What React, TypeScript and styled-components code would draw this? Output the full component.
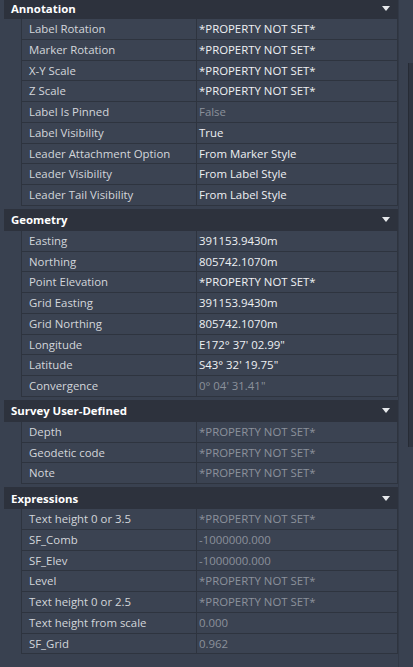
import React from "react";
import styled, { createGlobalStyle } from "styled-components";

const Global = createGlobalStyle`
  html, body { margin: 0; padding: 0; background: #394150; overflow: hidden; }
  body { font-family: "Open Sans", "Noto Sans", sans-serif; }
`;

const Page = styled.div`
  display: flex;
  width: 413px;
  height: 667px;
  background: #394150;
  overflow: hidden;
`;

const Panel = styled.div`
  width: 394px;
  margin-left: 4px;
  margin-top: -3px;
  display: flex;
  flex-direction: column;
  gap: 3px;
`;

const Gutter = styled.div`
  flex: 1;
  border-left: 1px solid #323946;
  display: flex;
  justify-content: flex-end;
`;

const Thumb = styled.div`
  width: 4px;
  height: 384px;
  margin-top: 63px;
  background: #2f3541;
  border-left: 1px solid #262b35;
`;

const Section = styled.div`
  display: flex;
  flex-direction: column;
`;

const Header = styled.div`
  height: 22px;
  background: #2d323d;
  display: flex;
  align-items: center;
  justify-content: space-between;
  padding: 0 8px 0 7px;
  color: #ffffff;
  font-weight: 700;
  font-size: 11.4px;
`;

const Caret = styled.svg`
  width: 8px;
  height: 5px;
  display: block;
`;

const Rows = styled.div`
  margin-left: 17px;
  border-left: 1px solid #2e343f;
  border-right: 1px solid #2e343f;
  display: flex;
  flex-direction: column;
`;

const Row = styled.div`
  height: 19.75px;
  border-bottom: 1px solid #2e343f;
  background: #3b4352;
  display: grid;
  grid-template-columns: 175px 1fr;
  font-size: 11.4px;
  line-height: 19.75px;
`;

const Label = styled.div`
  padding-left: 7px;
  color: #d3d6db;
  border-right: 1px solid #2e343f;
  white-space: nowrap;
  overflow: hidden;
`;

const Value = styled.div<{ $dim?: boolean }>`
  padding-left: 2px;
  color: ${(p) => (p.$dim ? "#8b919b" : "#eef0f2")};
  white-space: nowrap;
  overflow: hidden;
`;

type Item = [string, string, boolean?];

const NS = "*PROPERTY NOT SET*";

const sections: { title: string; items: Item[] }[] = [
  {
    title: "Annotation",
    items: [
      ["Label Rotation", NS],
      ["Marker Rotation", NS],
      ["X-Y Scale", NS],
      ["Z Scale", NS],
      ["Label Is Pinned", "False", true],
      ["Label Visibility", "True"],
      ["Leader Attachment Option", "From Marker Style"],
      ["Leader Visibility", "From Label Style"],
      ["Leader Tail Visibility", "From Label Style"],
    ],
  },
  {
    title: "Geometry",
    items: [
      ["Easting", "391153.9430m"],
      ["Northing", "805742.1070m"],
      ["Point Elevation", NS],
      ["Grid Easting", "391153.9430m"],
      ["Grid Northing", "805742.1070m"],
      ["Longitude", "E172° 37' 02.99\""],
      ["Latitude", "S43° 32' 19.75\""],
      ["Convergence", "0° 04' 31.41\"", true],
    ],
  },
  {
    title: "Survey User-Defined",
    items: [
      ["Depth", NS, true],
      ["Geodetic code", NS, true],
      ["Note", NS, true],
    ],
  },
  {
    title: "Expressions",
    items: [
      ["Text height 0 or 3.5", NS, true],
      ["SF_Comb", "-1000000.000", true],
      ["SF_Elev", "-1000000.000", true],
      ["Level", NS, true],
      ["Text height 0 or 2.5", NS, true],
      ["Text height from scale", "0.000", true],
      ["SF_Grid", "0.962", true],
    ],
  },
];

export default function App() {
  return (
    <Page>
      <Global />
      <Panel>
        {sections.map((s) => (
          <Section key={s.title}>
            <Header>
              <span>{s.title}</span>
              <Caret viewBox="0 0 8 5">
                <path d="M0 0 H8 L4 5 Z" fill="#e6e8eb" />
              </Caret>
            </Header>
            <Rows>
              {s.items.map(([l, v, dim]) => (
                <Row key={l}>
                  <Label>{l}</Label>
                  <Value $dim={dim}>{v}</Value>
                </Row>
              ))}
            </Rows>
          </Section>
        ))}
      </Panel>
      <Gutter>
        <Thumb />
      </Gutter>
    </Page>
  );
}
